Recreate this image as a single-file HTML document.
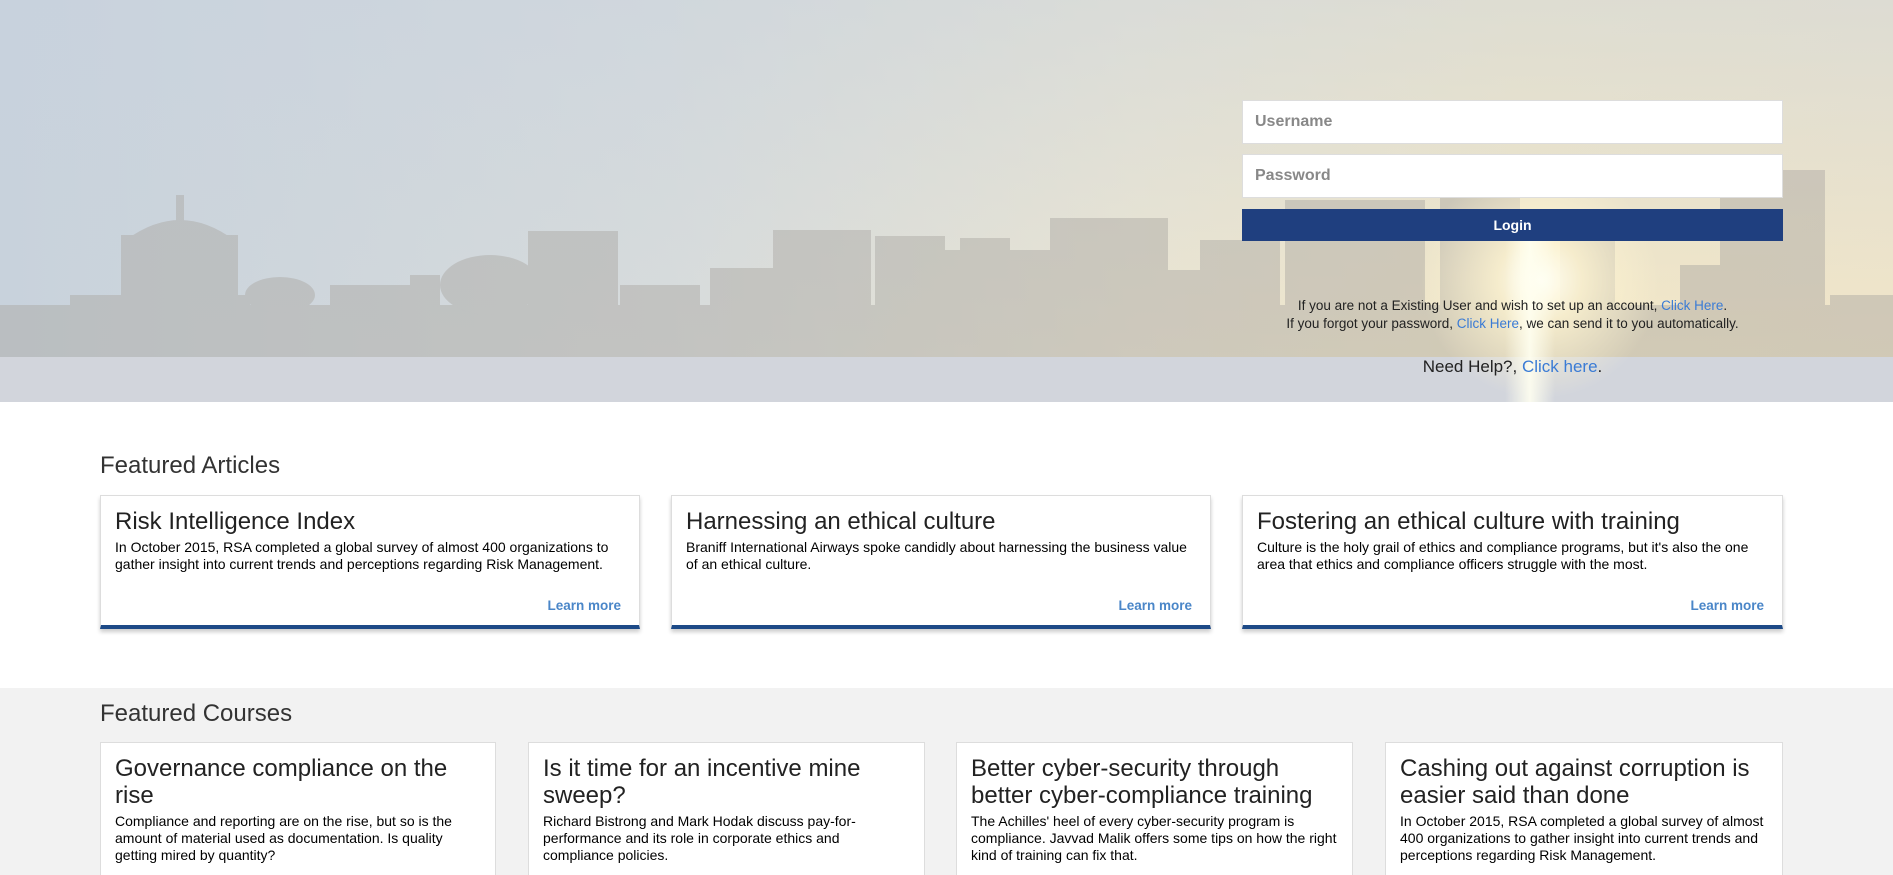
<!DOCTYPE html>
<html><head><meta charset="utf-8"><style>
*{margin:0;padding:0;box-sizing:border-box}
html,body{width:1893px;height:875px;overflow:hidden}
body{position:relative;font-family:"Liberation Sans",sans-serif;background:#fff;color:#222}
.hero{position:absolute;left:0;top:0;width:1893px;height:402px;overflow:hidden;
background:linear-gradient(90deg,#c8d2dc 0%,#d8dcdc 35%,#ece6d2 60%,#f4e8c6 80%,#f2e6c8 100%)}
.hero .fade{position:absolute;left:0;top:0;width:100%;height:360px;background:linear-gradient(180deg,rgba(200,210,222,.5) 0%,rgba(235,230,215,0) 100%)}
.sun{position:absolute;left:1420px;top:160px;width:240px;height:240px;border-radius:50%;background:radial-gradient(circle,rgba(255,255,245,1) 0%,rgba(255,245,210,.8) 25%,rgba(255,235,190,0) 70%)}
.beam{position:absolute;left:1505px;top:240px;width:50px;height:162px;background:linear-gradient(90deg,rgba(255,255,240,0),rgba(255,255,240,.9),rgba(255,255,240,0))}
.inp{position:absolute;left:1242px;width:541px;height:44px;background:#fff;border:1px solid #ddd;font-size:16px;color:#888;padding:12px 12px;font-weight:bold}
.btn{position:absolute;left:1242px;top:209px;width:541px;height:32px;background:#1f3f7f;color:#fff;font-size:14px;font-weight:bold;text-align:center;line-height:32px}
.msg{position:absolute;left:1242px;width:541px;text-align:center;font-size:13.5px;color:#222}
a{color:#3a7bd5;text-decoration:none}
h2{position:absolute;font-size:24px;font-weight:normal;color:#333}
.card{position:absolute;background:#fff;border:1px solid #ddd;padding:12px 14px;white-space:nowrap}
.card h3{font-size:24px;font-weight:normal;color:#222;line-height:27px}
.card p{font-size:14px;line-height:17px;color:#000;margin-top:4px}
.art{top:495px;height:134px;border-bottom:4px solid #1d4a87;box-shadow:0 3px 4px rgba(0,0,0,.2)}
.lm{position:absolute;right:18px;bottom:12px;font-size:13.5px;font-weight:bold;color:#4a86c8}
.gray{position:absolute;left:0;top:688px;width:1893px;height:187px;background:#f2f2f2}
.crs{top:742px;height:140px;border-bottom:none}
</style></head><body>
<div class="hero">
<div class="fade"></div>
<svg width="1893" height="402" style="position:absolute;left:0;top:0">
<g fill="#aaa7a2" opacity=".45">
<rect x="0" y="305" width="1893" height="55"/>
<rect x="70" y="295" width="180" height="65"/>
<rect x="121" y="235" width="117" height="125"/>
<path d="M126 240 Q180 200 234 240Z"/>
<rect x="176" y="195" width="8" height="30"/>
<ellipse cx="280" cy="295" rx="35" ry="18"/>
<rect x="330" y="285" width="90" height="75"/>
<rect x="410" y="275" width="30" height="85"/>
<rect x="528" y="231" width="90" height="129"/>
<ellipse cx="490" cy="285" rx="50" ry="30"/>
<rect x="620" y="285" width="80" height="75"/>
<rect x="710" y="268" width="70" height="92"/>
<rect x="773" y="230" width="98" height="130"/>
<rect x="875" y="236" width="70" height="124"/>
<rect x="940" y="250" width="110" height="110"/>
<rect x="960" y="238" width="50" height="20"/>
<rect x="1050" y="218" width="118" height="142"/>
<rect x="1165" y="270" width="80" height="90"/>
<rect x="1200" y="240" width="80" height="120"/>
<rect x="1285" y="200" width="140" height="160"/>
<rect x="1440" y="195" width="80" height="165"/>
<rect x="1560" y="230" width="55" height="130"/>
<rect x="1720" y="170" width="105" height="190"/>
<rect x="1680" y="265" width="40" height="95"/>
<rect x="1830" y="295" width="63" height="65"/>
</g>
<rect x="0" y="357" width="1893" height="45" fill="#d2d5dc"/>
</svg>
<div class="sun"></div>
<div class="beam"></div>
<div class="inp" style="top:100px">Username</div>
<div class="inp" style="top:154px">Password</div>
<div class="btn">Login</div>
<div class="msg" style="top:297px;line-height:18px">If you are not a Existing User and wish to set up an account, <a>Click Here</a>.<br>If you forgot your password, <a>Click Here</a>, we can send it to you automatically.</div>
<div class="msg" style="top:357px;font-size:17px">Need Help?, <a>Click here</a>.</div>
</div>

<h2 style="left:100px;top:452px">Featured Articles</h2>
<div class="card art" style="left:100px;width:540px"><h3>Risk Intelligence Index</h3><p>In October 2015, RSA completed a global survey of almost 400 organizations to<br>gather insight into current trends and perceptions regarding Risk Management.</p><span class="lm">Learn more</span></div>
<div class="card art" style="left:671px;width:540px"><h3>Harnessing an ethical culture</h3><p>Braniff International Airways spoke candidly about harnessing the business value<br>of an ethical culture.</p><span class="lm">Learn more</span></div>
<div class="card art" style="left:1242px;width:541px"><h3>Fostering an ethical culture with training</h3><p>Culture is the holy grail of ethics and compliance programs, but it's also the one<br>area that ethics and compliance officers struggle with the most.</p><span class="lm">Learn more</span></div>

<div class="gray"></div>
<h2 style="left:100px;top:700px">Featured Courses</h2>
<div class="card crs" style="left:100px;width:396px"><h3>Governance compliance on the<br>rise</h3><p>Compliance and reporting are on the rise, but so is the<br>amount of material used as documentation. Is quality<br>getting mired by quantity?</p></div>
<div class="card crs" style="left:528px;width:397px"><h3>Is it time for an incentive mine<br>sweep?</h3><p>Richard Bistrong and Mark Hodak discuss pay-for-<br>performance and its role in corporate ethics and<br>compliance policies.</p></div>
<div class="card crs" style="left:956px;width:397px"><h3>Better cyber-security through<br>better cyber-compliance training</h3><p>The Achilles' heel of every cyber-security program is<br>compliance. Javvad Malik offers some tips on how the right<br>kind of training can fix that.</p></div>
<div class="card crs" style="left:1385px;width:398px"><h3>Cashing out against corruption is<br>easier said than done</h3><p>In October 2015, RSA completed a global survey of almost<br>400 organizations to gather insight into current trends and<br>perceptions regarding Risk Management.</p></div>
</body></html>
